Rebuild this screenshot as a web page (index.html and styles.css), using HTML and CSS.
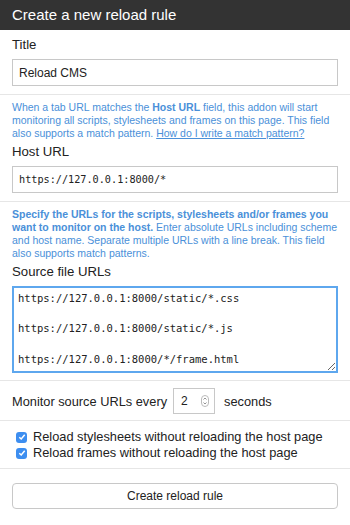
FILE: index.html
```html
<!DOCTYPE html>
<html lang="en">
<head>
    <meta charset="UTF-8">
    <meta name="viewport" content="width=device-width, initial-scale=1.0">
    <title>Create a new reload rule</title>
    <link rel="stylesheet" href="styles.css">
</head>
<body>
<div class="header">Create a new reload rule</div>

<div class="section">
    <label class="field-label" for="title">Title</label>
    <input id="title" class="text-input" type="text" value="Reload CMS">
</div>

<div class="section">
    <p class="help">When a tab URL matches the <b>Host URL</b> field, this addon will start monitoring all scripts, stylesheets and frames on this page. This field also supports a match pattern. <a href="#">How do I write a match pattern?</a></p>
    <label class="field-label" for="host">Host URL</label>
    <input id="host" class="text-input mono" type="text" value="https://127.0.0.1:8000/*">
</div>

<div class="section sources-section">
    <p class="help"><b>Specify the URLs for the scripts, stylesheets and/or frames you want to monitor on the host.</b> Enter absolute URLs including scheme and host name. Separate multiple URLs with a line break. This field also supports match patterns.</p>
    <label class="field-label" for="sources">Source file URLs</label>
    <textarea id="sources" class="sources mono">https://127.0.0.1:8000/static/*.css

https://127.0.0.1:8000/static/*.js

https://127.0.0.1:8000/*/frame.html</textarea>
</div>

<div class="section row">
    <span>Monitor source URLs every</span>
    <div class="number-box">
        <span>2</span>
        <svg class="spin" width="8" height="12" viewBox="0 0 8 12">
            <rect x="0.5" y="0.5" width="7" height="11" rx="3.5" fill="#fff" stroke="#bbb"/>
            <path d="M2.5 4.5 L4 3 L5.5 4.5" fill="none" stroke="#777" stroke-width="0.8"/>
            <path d="M2.5 7.5 L4 9 L5.5 7.5" fill="none" stroke="#777" stroke-width="0.8"/>
        </svg>
    </div>
    <span>seconds</span>
</div>

<div class="section checks">
    <label class="check"><span class="box"><svg width="10" height="10" viewBox="0 0 10 10"><path d="M2.3 5.2 L4.2 7 L7.7 2.8" fill="none" stroke="#fff" stroke-width="1.5"/></svg></span>Reload stylesheets without reloading the host page</label>
    <label class="check"><span class="box"><svg width="10" height="10" viewBox="0 0 10 10"><path d="M2.3 5.2 L4.2 7 L7.7 2.8" fill="none" stroke="#fff" stroke-width="1.5"/></svg></span>Reload frames without reloading the host page</label>
</div>

<div class="section last">
    <button class="create-btn">Create reload rule</button>
</div>
</body>
</html>
```

FILE: styles.css
```css
body {
    font-family: "Liberation Sans", Arial, sans-serif;
    background-color: #fff;
    color: #222;
    margin: 0;
    padding: 0;
}

.header {
    background-color: #333;
    color: #fff;
    font-size: 15px;
    height: 30px;
    line-height: 30px;
    padding: 0 12px;
}

.section {
    padding: 7px 12px 8px;
    border-bottom: 1px solid #e6e6e6;
}

.sources-section {
    padding-bottom: 7px;
}

.section.last {
    border-bottom: none;
    padding-top: 14px;
}

.field-label {
    display: block;
    font-size: 13.2px;
    line-height: 16px;
    margin-bottom: 6px;
}

.text-input {
    display: block;
    box-sizing: border-box;
    width: 100%;
    height: 27px;
    border: 1px solid #c8c8c8;
    padding: 0 6px;
    font-family: "Liberation Sans", Arial, sans-serif;
    font-size: 12px;
    color: #222;
    margin: 0;
}

.mono {
    font-family: "DejaVu Sans Mono", monospace;
    font-size: 10.2px;
}

.help {
    color: #4a90d9;
    font-size: 10.5px;
    line-height: 13px;
    margin: -1px 0 4px;
}

.help a {
    color: #4a90d9;
}

.sources {
    display: block;
    box-sizing: border-box;
    width: 100%;
    height: 87px;
    border: 2px solid #5ea7ee;
    padding: 3px 4px;
    font-size: 10.5px;
    line-height: 15.2px;
    color: #222;
    resize: vertical;
    margin: 0;
}

.row {
    display: flex;
    align-items: center;
    font-size: 12.8px;
    padding-top: 7px;
    padding-bottom: 6px;
}

.number-box {
    display: flex;
    align-items: center;
    justify-content: space-between;
    box-sizing: border-box;
    width: 42px;
    height: 26px;
    border: 1px solid #c8c8c8;
    padding: 0 5px 0 7px;
    margin: 0 9px 0 6px;
    font-size: 12px;
}

.checks {
    padding-top: 8px;
    padding-bottom: 7px;
}

.check {
    display: flex;
    align-items: center;
    font-size: 12.8px;
    line-height: 16px;
    padding-left: 4px;
}

.box {
    width: 11px;
    height: 11px;
    border-radius: 3px;
    background-color: #3d8ef0;
    margin-right: 6px;
    display: flex;
    align-items: center;
    justify-content: center;
}

.create-btn {
    display: block;
    width: 100%;
    height: 26px;
    background-color: #fff;
    border: 1px solid #c8c8c8;
    border-radius: 4px;
    font-family: "Liberation Sans", Arial, sans-serif;
    font-size: 12px;
    color: #222;
}
```
